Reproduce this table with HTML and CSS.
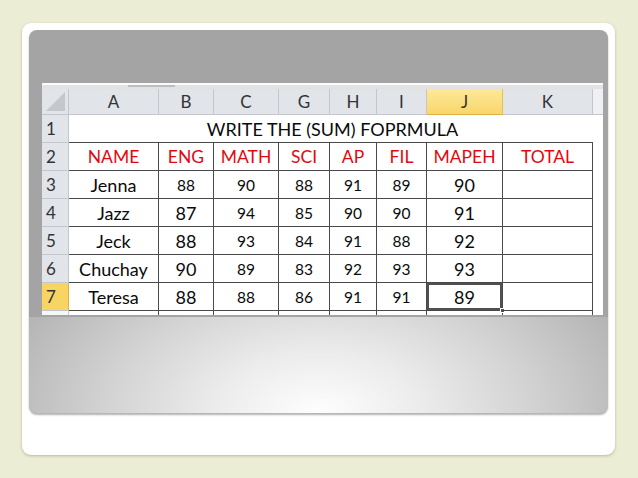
FILE: index.html
```html
<!DOCTYPE html>
<html>
<head>
<meta charset="utf-8">
<link rel="stylesheet" href="styles.css">
</head>
<body>
<div class="card">
  <div class="panel">
    <div class="sheet">
      <div class="topstrip"><div class="tab"></div></div>
      <div class="grid">
        <div class="hd corner"></div>
        <div class="hd col">A</div>
        <div class="hd col">B</div>
        <div class="hd col">C</div>
        <div class="hd col">G</div>
        <div class="hd col">H</div>
        <div class="hd col">I</div>
        <div class="hd col sel">J</div>
        <div class="hd col">K</div>
        <div class="hd col end"></div>

        <div class="hd rn">1</div>
        <div class="title">WRITE THE (SUM) FOPRMULA</div>
        <div class="blank"></div>

        <div class="hd rn">2</div>
        <div class="c red">NAME</div>
        <div class="c red">ENG</div>
        <div class="c red">MATH</div>
        <div class="c red">SCI</div>
        <div class="c red">AP</div>
        <div class="c red">FIL</div>
        <div class="c red">MAPEH</div>
        <div class="c red">TOTAL</div>
        <div class="blank"></div>

        <div class="hd rn">3</div>
        <div class="c name">Jenna</div>
        <div class="c sm">88</div>
        <div class="c sm">90</div>
        <div class="c sm">88</div>
        <div class="c sm">91</div>
        <div class="c sm">89</div>
        <div class="c lg">90</div>
        <div class="c"></div>
        <div class="blank"></div>

        <div class="hd rn">4</div>
        <div class="c name">Jazz</div>
        <div class="c lg">87</div>
        <div class="c sm">94</div>
        <div class="c sm">85</div>
        <div class="c sm">90</div>
        <div class="c sm">90</div>
        <div class="c lg">91</div>
        <div class="c"></div>
        <div class="blank"></div>

        <div class="hd rn">5</div>
        <div class="c name">Jeck</div>
        <div class="c lg">88</div>
        <div class="c sm">93</div>
        <div class="c sm">84</div>
        <div class="c sm">91</div>
        <div class="c sm">88</div>
        <div class="c lg">92</div>
        <div class="c"></div>
        <div class="blank"></div>

        <div class="hd rn">6</div>
        <div class="c name">Chuchay</div>
        <div class="c lg">90</div>
        <div class="c sm">89</div>
        <div class="c sm">83</div>
        <div class="c sm">92</div>
        <div class="c sm">93</div>
        <div class="c lg">93</div>
        <div class="c"></div>
        <div class="blank"></div>

        <div class="hd rn selrow">7</div>
        <div class="c name">Teresa</div>
        <div class="c lg">88</div>
        <div class="c sm">88</div>
        <div class="c sm">86</div>
        <div class="c sm">91</div>
        <div class="c sm">91</div>
        <div class="c lg active">89<span class="handle"></span></div>
        <div class="c"></div>
        <div class="blank"></div>

        <div class="hd rn part"></div>
        <div class="p"></div>
        <div class="p"></div>
        <div class="p"></div>
        <div class="p"></div>
        <div class="p"></div>
        <div class="p"></div>
        <div class="p"></div>
        <div class="p"></div>
        <div class="blank"></div>
      </div>
    </div>
    <div class="reflect"></div>
  </div>
</div>
</body>
</html>
```

FILE: styles.css
```css
* { box-sizing: border-box; }
html, body { margin: 0; padding: 0; }
body {
  background: #ecedd5;
  width: 638px;
  height: 478px;
  overflow: hidden;
  font-family: Lato, "Liberation Sans", sans-serif;
  padding: 23px 0 0 22px;
}
.card {
  width: 593px;
  height: 432px;
  background: #fff;
  border-radius: 9px;
  box-shadow: 0 1px 3px rgba(120, 120, 80, 0.45);
  padding: 7px;
}
.panel {
  width: 579px;
  height: 383px;
  background: #a4a4a4;
  border-radius: 8px;
  box-shadow: 0 2px 2px rgba(0, 0, 0, 0.3);
  padding-top: 53px;
  display: flex;
  flex-direction: column;
  overflow: hidden;
}
.sheet {
  margin-left: 13px;
  width: 561px;
  background: #fff;
}
.topstrip {
  height: 6px;
  border-top: 2px solid #fbfbfb;
  background: #e2e2e2;
  position: relative;
}
.tab {
  position: absolute;
  left: 86px;
  top: 0;
  width: 47px;
  height: 2px;
  background: #bdbdbd;
}
.grid {
  display: grid;
  grid-template-columns: 27px 90px 55px 65px 51px 47px 50px 76px 90px 10px;
  grid-template-rows: 26px repeat(7, 28px) 4px;
}
.hd {
  background: #e1e4e9;
  border-right: 1px solid #c3c7cd;
  border-bottom: 1px solid #c3c7cd;
  color: #333;
  font-size: 17px;
  display: flex;
  align-items: center;
}
.col { justify-content: center; }
.end { border-right: none; background: #eef0f3; }
.corner { position: relative; }
.corner::after {
  content: "";
  position: absolute;
  right: 3px;
  bottom: 3px;
  width: 0;
  height: 0;
  border-left: 19px solid transparent;
  border-bottom: 19px solid #c4c7cb;
}
.sel {
  background: linear-gradient(#fde89a, #f9d66a);
  border-bottom: 1px solid #e0b040;
  border-right-color: #e3c15a;
}
.rn { padding-left: 4px; font-size: 17px; }
.selrow {
  background: #f8d462;
  border-right-color: #e0b040;
}
.part { background: #f6f7f9; border-bottom: none; }
.title {
  grid-column: 2 / span 8;
  display: flex;
  align-items: center;
  justify-content: center;
  font-size: 18px;
  color: #0a0a0a;
  border-bottom: 1px solid #4a4a4a;
  padding-left: 3px;
}
.blank { background: #fff; }
.c {
  display: flex;
  align-items: center;
  justify-content: center;
  border-right: 1px solid #4a4a4a;
  border-bottom: 1px solid #4a4a4a;
  color: #0a0a0a;
  position: relative;
}
.red { color: #e3080f; font-size: 17.5px; }
.name { font-size: 18px; }
.sm { font-size: 15.5px; }
.lg { font-size: 18px; }
.active {
  box-shadow: inset 0 0 0 2px #505050;
}
.handle {
  position: absolute;
  right: -3px;
  bottom: -3px;
  width: 5px;
  height: 5px;
  background: #505050;
  border: 1px solid #fff;
}
.p {
  border-right: 1px solid #4a4a4a;
}
.reflect {
  flex: 1;
  margin-top: 2px;
  background: radial-gradient(ellipse 340px 200px at 50% 100%, #fefefe 0%, #ececec 30%, #d3d3d3 62%, #b2b2b2 100%);
}
```
